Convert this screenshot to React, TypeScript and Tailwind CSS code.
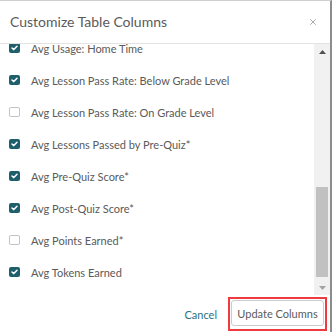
import { X } from "lucide-react";

const columns = [
  { label: "Avg Usage: Home Time", checked: true },
  { label: "Avg Lesson Pass Rate: Below Grade Level", checked: true },
  { label: "Avg Lesson Pass Rate: On Grade Level", checked: false },
  { label: "Avg Lessons Passed by Pre-Quiz*", checked: true },
  { label: "Avg Pre-Quiz Score*", checked: true },
  { label: "Avg Post-Quiz Score*", checked: true },
  { label: "Avg Points Earned*", checked: false },
  { label: "Avg Tokens Earned", checked: true },
];

function Checkbox({ checked }: { checked: boolean }) {
  if (!checked) {
    return <span className="w-[11px] h-[10px] rounded-[2px] border border-[#c4c4c4] bg-white shrink-0" />;
  }
  return (
    <span className="w-[11px] h-[10px] rounded-[2px] bg-[#1f5f6c] flex items-center justify-center shrink-0">
      <svg width="7" height="6" viewBox="0 0 7 6" fill="none">
        <polyline points="1,3 2.8,4.6 6,1.2" stroke="white" strokeWidth="1.5" strokeLinecap="round" strokeLinejoin="round" />
      </svg>
    </span>
  );
}

export default function App() {
  return (
    <div
      className="w-[332px] h-[332px] bg-white border-t border-[#cfcfcf] border-r-2 border-r-[#8c8c8c] flex flex-col text-[#5a5a5a]"
      style={{ fontFamily: "Lato, 'Open Sans', sans-serif" }}
    >
      {/* Header */}
      <div className="h-[43px] shrink-0 flex items-center justify-between pl-[10px] pr-[12px] border-b border-[#e3e3e3]">
        <h2 className="text-[14px] leading-none text-[#5a5a5a]">Customize Table Columns</h2>
        <X className="w-[10px] h-[10px] text-[#8a8a8a]" strokeWidth={1.75} />
      </div>

      {/* Body */}
      <div className="h-[251px] shrink-0 flex">
        <div className="flex-1 overflow-hidden">
          <div className="-mt-[12px]">
            {columns.map((c) => (
              <label key={c.label} className="h-[32px] flex items-center gap-[11px] pl-[9px]">
                <Checkbox checked={c.checked} />
                <span className="text-[11px] leading-none text-[#5a5a5a] whitespace-nowrap">{c.label}</span>
              </label>
            ))}
          </div>
        </div>

        {/* Scrollbar */}
        <div className="w-[16px] bg-[#f1f1f1] flex flex-col items-center">
          <div className="h-[15px] flex items-center justify-center">
            <svg width="7" height="4" viewBox="0 0 7 4">
              <polygon points="0,4 3.5,0 7,4" fill="#505050" />
            </svg>
          </div>
          <div className="flex-1 w-full px-[2px] pt-[128px]">
            <div className="h-[90px] bg-[#c1c1c1]" />
          </div>
          <div className="h-[15px] flex items-center justify-center">
            <svg width="7" height="4" viewBox="0 0 7 4">
              <polygon points="0,0 3.5,4 7,0" fill="#a3a3a3" />
            </svg>
          </div>
        </div>
      </div>

      {/* Footer */}
      <div className="flex-1 flex items-center justify-end gap-[11px] pr-[3px] pt-[1px]">
        <button className="text-[11px] leading-none text-[#2b7180]">Cancel</button>
        <div className="border-2 border-[#ef3a3f] pt-[1px] px-[1px] pb-[3px]">
          <button className="h-[26px] w-[93px] rounded-[3px] border border-[#cccccc] bg-white text-[11px] leading-none text-[#5a5a5a] whitespace-nowrap">
            Update Columns
          </button>
        </div>
      </div>
    </div>
  );
}
